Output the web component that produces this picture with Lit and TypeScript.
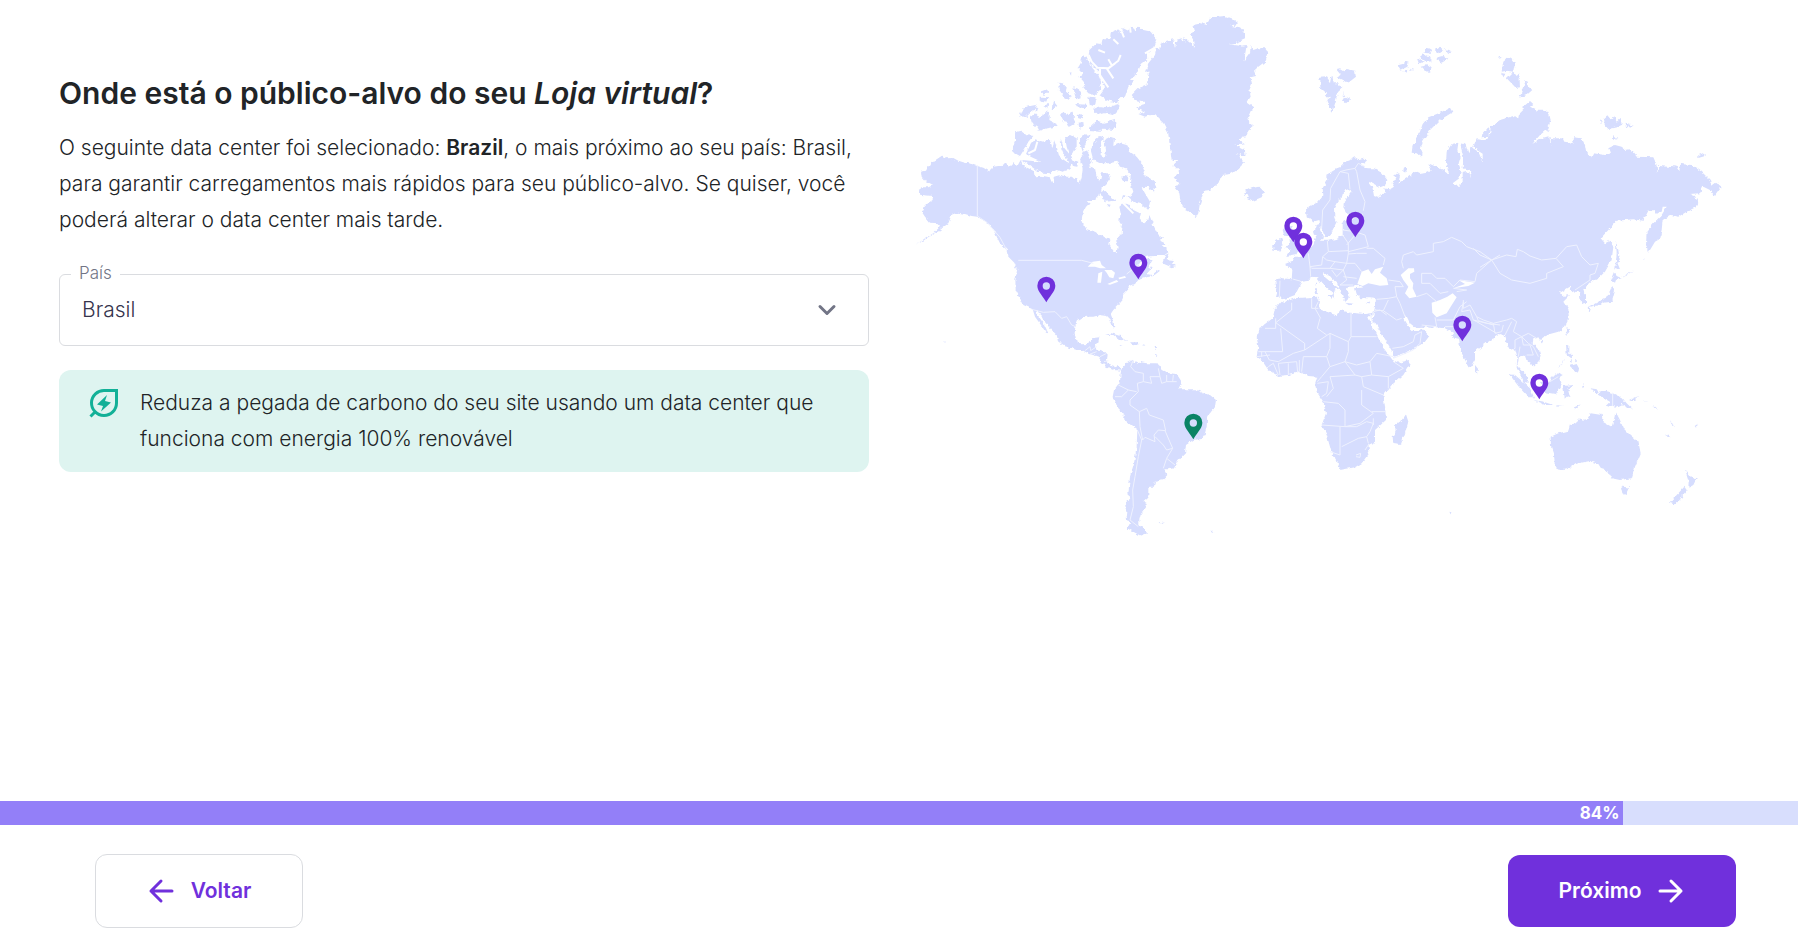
import { LitElement, css, html, svg } from "lit";
import { customElement, property } from "lit/decorators.js";

/** A run of "x,y" points measured from its own origin. */
type Run = [number, number, string];

const trace = (...runs: Run[]): string =>
  "M" +
  runs
    .map(([dx, dy, points]) =>
      points
        .trim()
        .split(/\s+/)
        .map((pair) => {
          const [x, y] = pair.split(",").map(Number);
          return `${x + dx},${y + dy}`;
        })
        .join("L")
    )
    .join("L");

const shapes = (dx: number, dy: number, list: string[]): string =>
  list.map((points) => trace([dx, dy, points]) + "Z").join("");

const lines = (dx: number, dy: number, list: string[]): string =>
  list.map((points) => trace([dx, dy, points])).join("");

const NORTH_AMERICA =
  trace(
    [0, 0, `128,466 140,475 160,474 175,482 195,488 215,492 232,498 250,503 270,515 280,500 300,497 320,487 326,500 340,490 352,498 362,480 370,497 385,505 405,515 408,532 425,530 450,535 458,552 462,530 480,525 500,530 515,530 530,535 538,552 545,530 548,505 540,480 548,460 560,448 575,485 565,498 585,505 590,530 600,543 605,520 625,520 630,535 620,550 605,565 598,590 585,600 560,600 570,610 558,620 548,640 545,665 560,688 585,695 600,705 625,715 632,720 628,735 640,752 650,757 653,740 648,720 665,700 668,680 658,665 662,640 658,620 670,610 690,615 700,630 720,640 716,655 730,672 745,660 748,645 760,675 770,695 790,715 780,722 806,735 785,735 807,755 790,768 760,768 740,770 722,786 700,812 725,800 745,775 755,782 745,800`],
    [0, 600, `755,205 740,222 755,225 775,210 780,212 760,228 740,232 715,240 705,252 690,258 680,270 668,283 668,300 655,315 640,330 632,342 640,362 643,383 635,378 628,360 622,348 600,345 580,350 560,350 545,355 528,365 526,380 524,400 530,425 545,433 565,432 575,415 598,412 595,425 585,435 590,452 605,453 620,460 618,480 625,495 645,502 655,498 665,508 660,512 645,510 620,500 605,485 595,470 570,462 545,450 530,450 500,440 475,425 470,405 450,385 430,360 420,340 408,333 415,348 432,372 445,400 438,398 425,378 405,350 398,328 370,315 360,295 347,270 346,240 352,210 346,200 340,185 325,170 320,150 300,130 285,100 270,75 245,58 232,50 215,48 195,42 175,38 155,45 145,70 120,90 90,108 70,122 48,135 75,115 100,100 120,80 110,70 90,68 75,50 65,35 75,15 98,0`],
    [0, 0, `98,588 65,585 53,570 65,562 85,562 100,555 75,542 65,530 63,515 78,512 90,490 110,478`]
  ) + "Z";

const ARCTIC = shapes(0, 0, [
  `345,397 365,392 375,405 400,408 385,425 375,445 360,468 345,460 337,445 345,425`,
  `405,418 430,425 450,420 458,445 462,420 470,440 478,470 500,485 515,492 505,510 485,515 470,510 450,520 430,518 415,515 395,500 380,490 365,480 390,482 425,485 395,472 378,462 388,440`,
  `495,410 510,405 530,415 530,440 520,460 510,470 500,440`,
  `482,415 490,440 510,465 525,490 515,495 495,470 484,445`,
  `545,403 572,404 560,425 548,455 540,430`,
  `522,480 535,485 532,500 518,498`,
  `588,418 600,408 612,412 603,435 602,465 615,472 618,450 612,420 630,410 642,414 640,438 660,430 680,435 690,455 710,470 725,490 735,515 730,525 750,535 768,550 762,575 745,560 725,562 735,580 750,605 745,630 725,612 700,605 690,595 675,590 665,600 670,585 690,590 700,575 690,545 692,525 678,505 660,500 652,485 625,490 600,490 580,480 572,450`,
  `596,575 610,570 632,590 648,602 615,605`,
  `620,612 632,614 628,622`,
  `668,528 685,530 684,544 668,543`,
  `575,375 590,362 612,368 645,360 647,380 640,390 610,386 600,392 565,390`,
  `580,328 600,318 622,322 655,312 655,330 645,344 620,338 590,346`,
  `568,150 590,130 605,132 608,118 630,118 632,98 650,90 662,100 668,84 685,92 690,80 705,88 712,80 730,90 755,95 772,118 762,145 740,160 745,175 722,195 715,212 690,240 705,240 685,260 675,290 658,292 655,308 625,302 612,295 598,285 615,262 608,240 598,215 575,195 566,170`,
  `550,166 562,175 578,205 595,225 605,250 600,270 582,285 565,280 550,262 555,250 538,230 548,222 533,205 542,190`,
  `475,248 488,250 500,262 498,275 515,288 508,300 490,290 476,270`,
  `520,262 540,268 545,292 528,298`,
  `420,275 440,268 445,277 432,285`,
  `422,290 445,292 442,308 422,305`,
  `358,348 365,330 380,320 410,314 402,330 390,340 378,352`,
  `390,352 405,340 415,350 430,345 440,332 450,345 448,360 470,372 468,380 440,385 418,392 412,380 395,370`,
  `480,348 490,335 500,345 515,335 525,350 522,372 508,380 500,365 488,362`,
  `535,368 550,366 552,382 538,386`,
  `530,340 548,345 545,358 532,355`,
  `458,300 472,318 455,330`,
  `526,312 560,314 556,325 530,322`,
  `430,318 448,312 445,328`,
  `400,325 415,322 410,338`,
  `508,218 517,216 516,232`,
  `565,290 590,292 585,318 570,315`,
  `787,790 796,765 806,760 800,778 822,780 815,790 828,798 815,802`,
  `262,660 285,685 302,712 288,700`,
  `340,775 358,795 350,798`,
]);

const ARCTIC_FJORDS = lines(0, 0, [
  `566,165 575,185 592,203 625,205 645,190 655,182 662,165`,
  `625,178 635,195`, `600,205 600,225 610,240 625,262`, `620,205 640,235`,
  `595,150 615,158`, `640,118 655,132`, `665,95 672,112`, `690,82 692,98`, `735,160 770,140`,
  `412,425 405,450 385,460`, `660,600 700,640`,
]);

const GREENLAND = trace([690, 0, `45,215 55,190 75,165 80,142 95,150 88,135 110,122 130,118 135,148 140,116 155,112 165,130 160,110 180,125 195,143 192,118 180,100 195,95 190,75 215,70 230,75 240,55 262,50 285,48 305,55 325,70 300,78 330,82 345,100 345,118 325,127 295,133 330,137 350,135 345,165 340,187 360,160 362,135 370,150 385,145 405,145 415,158 405,185 385,200 372,212 378,228 362,232 366,252 358,270 362,290 350,308 370,322 360,345 352,360 372,378 355,392 348,412 320,415 345,430 315,435 345,450 347,470 320,460 345,487 320,510 300,522 275,525 265,550 240,570 222,572 210,610 205,640 198,652 185,640 165,630 152,605 148,580 135,565 148,550 133,535 150,515 130,495 145,480 125,480 120,440 115,400 100,370 75,345 60,345 45,350 25,342 45,335 18,322 45,315 45,305 20,305 5,285 25,265 50,255 55,225 62,215`]) + "Z";

const ATLANTIC_ISLANDS = shapes(690, 0, [
  `335,560 345,572 365,562 385,557 402,575 395,592 368,603 347,597 354,588 338,580 350,578`,
  `568,233 588,232 600,250 605,222 612,250 625,250 637,264 625,275 618,300 608,335 595,315 590,300 605,290 585,288 588,278 570,262 574,250`,
  `620,210 630,208 640,214 650,207 675,212 678,230 655,248 640,240 622,232 632,224`,
  `636,272 645,290 660,298 650,312 638,300 642,288`,
  `803,196 818,192 826,185 836,188 832,200 820,206 814,215 808,206`,
  `820,214 832,212 828,220`, `840,206 850,210 842,213`,
  `860,182 872,178 880,184 872,190`, `870,170 880,162 888,168 900,172 905,184 890,186`,
  `880,158 895,142 905,148 898,160`, `872,200 892,196 905,205 900,216 884,212`,
  `914,150 930,140 940,150 926,160`, `915,175 940,168 955,176 935,188`, `945,148 965,152 955,162`,
  `430,735 440,722 455,715 458,735 448,752 430,752`,
  `458,690 472,672 486,680 482,700 498,725 508,745 500,762 468,768 482,748 466,745 480,730 478,712 462,706`,
]);

const EURASIA =
  trace(
    [1020, 360, `198,268 212,258 235,245 250,225 248,205 262,180 258,165 275,155 300,140 318,122 345,112 355,118 368,114 378,125 362,136 380,145 400,145 425,158 442,180 438,195 420,202 395,188 383,185 398,205 402,228 420,235 418,220 438,218 430,205 450,208 462,200 455,190 468,180 462,168 472,160 480,165 476,188 500,175 525,155 540,162 560,158 575,150 565,130 588,140 610,150 628,162 618,130 620,95 635,72 655,68 652,90 662,110 656,130 662,155 658,175 635,192 655,198 668,182 668,160 685,155 692,175 690,150 668,145 670,110 662,78 675,68 685,100 692,80 715,95 728,125 728,98 700,80 710,55 740,60 755,35 745,22`],
    [1740, 90, `0,322 28,320 32,290 60,270 100,258 118,265 120,250 132,238 130,230 150,213 160,222 150,230 175,242 205,242 212,270 205,295 180,315 157,342 185,325 208,318 212,345 213,325 245,325 250,335 280,338 282,322 305,325 315,345 318,362 332,385 340,370 375,375 390,370 385,355 405,345 425,350 430,360 452,358 470,380 520,382 528,400 533,425 538,408 580,412 588,405 598,422 600,402 635,405 665,425 690,450 695,468 708,458 725,470 705,498 690,480 670,470 660,490 628,492 645,498 655,522 650,530 620,545 595,560 575,555 548,570 545,600 538,628 525,635 505,668 498,645 500,605 520,580 545,555 560,530 548,530 545,545 525,552 525,540 505,542 490,572 460,568 410,572 390,595 362,625 375,640 390,632 400,650 395,690 375,725 355,745 335,755 318,770 310,778 318,800 318,818 303,822 300,795 295,780 280,790 270,770 240,788 245,798 270,795 250,815 265,840`],
    [1590, 780, `417,175 415,182 405,200 385,215 360,222 340,232 330,240 325,232 310,238 308,250 325,265 332,290 325,305 308,320 302,308 290,302 285,288 268,285 262,315 275,330 290,345 293,368 280,365 270,340 260,325 262,290 255,265 240,270 232,255 220,225 210,222 190,235 175,245 155,260 135,275 135,300 122,323 115,318 100,290 90,265 88,240 75,238 63,225 75,222 45,205 20,202 0,203`],
    [990, 780, `575,200 555,202 540,190 528,165 520,178 532,198 548,213 565,213 576,205 598,228 585,245 555,265 520,280 490,290 487,275 470,245 445,205 428,180 430,165 435,140`],
    [1020, 360, `408,538 390,535 365,535 350,522 345,505 372,502 358,498 325,500 320,508 328,528 320,545 310,535 303,515 292,490 275,478 262,462 248,457 255,472 275,488 298,506 285,508 280,528 270,510 245,490 232,472 218,470 205,480 185,482 178,500 165,525 140,535 125,538 120,530 105,528 110,510 105,478 128,475 155,478 157,450 135,432 158,422 165,410 185,410 200,395 220,375 228,355 222,335 230,315 245,310 240,330 248,345 240,362 265,362 295,355 308,345 308,310 320,300 345,298 370,285 345,280 320,282 310,265 312,245 335,215 325,208 312,212 310,228 292,245 282,265 283,290 290,305 278,330 270,345 255,352 245,325 238,300 218,305 200,292`]
  ) + "Z";

const AFRICA = shapes(990, 780, [
  `155,122 165,126 195,115 235,112 262,110 270,125 265,145 290,155 320,165 330,150 360,158 405,162 430,158 415,172 428,200 445,235 465,270 488,300 505,308 540,300 538,315 520,345 485,375 460,405 465,440 468,480 435,510 435,545 415,555 418,578 395,610 375,622 330,630 320,600 305,578 290,525 275,495 288,460 280,425 260,395 255,375 262,350 235,348 215,335 175,345 145,348 115,330 95,300 80,290 85,260 80,230 95,200 128,175 135,145`,
  `528,463 535,485 525,520 512,555 490,552 488,530 497,515 495,490 515,482`,
]);

const SMALL_EUROPE = shapes(1020, 360, [
  `262,525 282,525 278,536 264,530`, `224,505 232,505 230,520 224,518`, `227,485 231,485 231,497 227,497`,
  `318,548 342,552 330,556`, `378,550 393,543 386,553`, `240,350 252,348 250,358 240,358`,
  `632,-38 600,-22 565,-8 548,12 540,35 528,55 528,70 518,75 515,98 530,100 545,112 552,108 542,85 548,65 570,30 600,0 640,-25`,
  `492,142 502,145 498,155 490,152`,
]);

const SOUTH_AMERICA = shapes(0, 600, [
  `665,508 680,490 702,478 700,492 715,485 740,490 770,490 785,510 805,520 830,522 845,545 835,568 860,568 885,568 910,580 930,585 948,600 945,620 930,640 922,648 920,680 915,700 903,717 880,720 858,735 855,760 835,780 822,805 805,808 793,808 802,825 790,838 765,842 762,860 745,860 745,890 728,905 740,912 738,922 722,945 718,960 718,975 742,1000 722,1007 700,995 682,985 690,970 680,955 682,935 678,910 688,900 685,880 690,830 702,790 710,740 712,690 680,665 660,630 640,600 638,590 642,570 660,545 662,520`,
  `615,405 635,400 660,408 682,422 660,420 640,405`, `690,427 710,427 720,433 700,436`, `655,435 668,436 660,438`,
  `728,433 738,434 732,437`, `775,968 795,964 785,970`, `932,990 942,1000 934,997`,
  `130,424 138,425 134,430`, `764,438 772,445 766,450`, `768,460 772,462 770,475`,
]);

const EAST_ISLANDS =
  shapes(1740, 90, [
    `90,78 105,100 100,125 80,122 65,125 70,95`, `80,145 100,125 110,138 118,130 120,172 108,174`,
    `60,128 78,132 68,142`, `137,153 145,170 157,180 140,195 118,203 128,175`, `52,81 62,82 57,87`,
    `372,265 382,256 392,268 402,260 410,275 422,265 425,285 410,292 385,297 374,285`, `432,278 462,288 448,294`,
    `400,315 412,328 398,330`, `360,268 365,272 362,280`, `655,376 668,370 678,377 655,384`, `200,300 210,302 204,310`,
    `407,632 415,660 420,695 412,698 420,718 406,715 410,670`, `402,725 410,738 425,745 408,750 405,758 392,750`,
    `397,768 405,782 396,815 370,818 362,825 340,828 325,832 355,815 378,805 390,785`, `323,833 333,835 328,848`,
    `425,742 462,720 440,736`, `490,690 494,684 492,690`,
  ]) +
  shapes(1590, 780, [
    `135,315 147,330 140,340 135,335`, `238,343 255,345 275,362 300,385 312,412 295,412 270,385`,
    `310,420 340,425 370,435 345,435`, `375,436 400,438 380,440`, `330,362 352,368 385,335 398,345 388,352 392,375 375,405 345,400`,
    `400,378 430,375 425,383 407,385 420,390 415,398 422,412 412,408 404,416`, `410,205 417,208 412,225 407,215`,
    `330,244 342,243 338,253`, `408,255 418,256 418,278 430,290 424,295 410,284`, `420,318 440,312 447,325 445,338 430,332`,
    `418,300 426,298 424,310`, `432,300 440,296 440,310`, `385,325 405,295 390,322`, `430,443 452,433 440,446`,
    `455,380 462,368 460,385`, `482,385 500,388 505,395 525,392 548,398 575,412 590,430 608,447 590,442 575,432 558,440 530,435 540,425 505,405 512,398 490,395`,
    `600,420 625,408 612,420`, `640,420 655,428 645,424`, `670,435 685,448 672,440`, `705,520 722,532 712,530`, `794,498 806,490 798,503`,
    `720,480 732,498 724,492`,
    `362,530 385,520 415,512 420,495 435,488 450,475 458,482 470,480 482,460 515,465 518,485 545,500 552,478 557,455 570,480 580,505 600,525 625,545 632,580 615,620 605,655 570,660 545,655 530,630 515,628 505,612 480,603 435,612 420,622 385,630 375,625 372,585 363,560`,
    `573,680 597,682 587,705 577,700`, `765,630 780,648 800,655 790,675 775,683 776,665`, `763,680 770,690 745,725 735,733 720,728 740,705`,
    `58,755 70,758 62,763`,
  ]);

const WATER =
  shapes(0, 600, [
    `563,200 578,185 600,182 605,195 618,205 600,205 585,200`, `592,248 595,220 607,215 603,248`,
    `613,210 635,210 645,218 640,235 628,232 620,218`, `622,252 650,240 655,245 630,254`, `655,233 675,228 678,233 658,238`,
  ]) +
  shapes(1020, 360, [
    `352,492 365,455 385,448 395,462 405,448 430,440 420,458 440,475 445,495 420,497 385,490 368,498`,
    `482,465 505,445 522,445 523,455 510,462 510,475 520,490 518,505 530,530 508,535 495,520 505,500 490,480`,
    `575,548 600,540 622,530 638,520 650,532 632,560 620,580 590,592 577,578`,
    `655,480 705,488 685,498 640,505 675,492`,
  ]);

const BORDERS =
  lines(0, 0, [`232,498 232,648 262,668 300,712 320,750`, `355,781 545,781 580,790`, `680,822 720,790`]) +
  lines(0, 600, [
    `395,328 430,337 465,335 485,355 500,350 515,375 527,380`, `555,452 570,440 572,452 590,440`, `590,455 570,462`, `600,470 620,460`, `612,485 625,482`,
    `700,480 692,500 705,515 730,520 730,545 712,550 715,575 690,600 690,615 718,635 740,625 748,645 790,660 797,692 775,690 762,705 765,725 735,712 728,720 720,680 718,635`,
    `645,590 665,590 685,570 655,555`, `685,570 710,575`, `730,545 755,550 750,530 780,530 775,505`, `780,530 785,550 800,545 800,525`, `800,545 830,545`, `820,525 818,545`,
    `765,710 790,735 800,750 818,745 795,692`, `818,745 800,775 790,805`, `800,775 825,795`,
    `712,690 725,720 715,770 705,830 698,870 700,920 690,960 715,980`,
  ]) +
  lines(1020, 360, [
    `245,325 248,270 270,240 272,205 300,155 325,160 330,208`, `300,155 318,150 345,145 350,155 360,210 375,245 370,272`, `345,145 355,130 375,140`,
    `262,362 265,395 248,410 260,420 285,425 320,430 325,400 325,370 308,345`, `308,330 345,335 375,345 385,380 325,395`, `345,345 320,375`, `380,385 400,385 435,415 430,435`,
    `325,402 350,400 380,400`, `265,395 325,392`, `320,430 345,430 365,455`, `310,470 350,475`, `285,425 270,445 215,445 210,440 245,435 248,410`, `275,450 290,470 310,450 320,480 300,495`, `300,495 340,495`, `320,430 310,450 270,445`,
    `205,400 210,440 212,470`, `120,482 118,530`, `158,477 180,483`,
    `445,480 480,485 490,500 465,500 470,530`, `410,538 445,535 470,530 480,550 495,590`, `405,570 430,572 445,540`, `430,572 470,600 485,595`,
    `485,425 490,405 520,395 530,405 580,395 580,370 610,365 635,352 665,365 680,380 720,395 755,420 780,405`, `485,425 490,445`, `530,530 560,520 590,545`,
    `545,490 545,460 575,460 590,475 615,475 640,500 660,480 705,485 710,460 755,420`, `545,490 570,490 600,520 625,515`, `640,505 680,510 650,515`,
    `585,592 590,620 545,615`, `590,600 640,600 660,560 680,545`, `670,545 665,575 690,570 700,600 740,610 780,615`, `700,600 710,605 770,640`, `615,620 645,620`,
    `460,715 520,690 540,670 545,635`,
  ]) +
  lines(1740, 90, [
    `-20,655 0,675 35,690 80,675 108,680 112,658 130,665 150,678 185,690 228,685 260,650 290,645 305,680 330,705 355,700 345,730 330,735 330,750 285,780`,
    `35,690 60,730 95,750 150,760 200,745 200,730 250,710 228,685`, `35,690 0,712`,
  ]) +
  lines(1590, 780, [
    `100,120 100,145 120,135 140,170 160,180 190,190 230,180 245,175 260,185 250,215 275,230 295,220 320,235`, `190,190 195,220 215,215 220,195`, `140,170 145,182 190,195`, `225,225 245,185`,
    `255,265 255,240 275,230 295,250 310,260 325,290`, `275,230 280,255 300,255 310,285 290,285`, `265,290 270,260`, `360,365 385,350`, `548,398 548,438`,
  ]) +
  lines(990, 780, [
    `135,190 185,150 185,128`, `245,115 245,145 265,145`, `137,175 137,188 224,250 224,270`, `105,205 137,205 137,188`, `152,205 158,275 105,275`, `85,275 105,275 118,300 145,305 190,280 224,270 300,220 355,245 355,275 345,305`,
    `300,220 300,265 290,290 220,290 215,335`, `270,175 262,205 290,225`, `363,158 363,230 440,230`, `363,230 355,245`, `265,125 255,145 272,175`, `290,290 300,320 275,350 262,365`, `300,320 345,305 375,345 395,350`,
    `345,305 380,315 420,305 425,345 395,350 400,380 460,405`, `420,305 440,280 490,290`, `425,345 475,350 520,325 490,305`, `475,350 475,385`, `300,350 375,345`, `262,370 295,365 290,400 275,410`, `300,350 310,385 290,410`, `280,425 325,430 345,450 345,490 345,500 380,500`, `275,495 345,500 390,490 430,460 395,435 395,390`,
    `330,585 330,500`, `335,560 385,535 410,530`, `380,500 410,485 430,490 420,515 410,530 415,550`, `415,555 405,570`, `378,585 392,580 390,592 378,590`, `425,455 465,455`, `430,475 430,495`, `95,275 95,290`, `80,290 120,285`, `115,320 130,310 145,345`, `145,310 150,345`, `175,310 175,345`, `200,305 203,338`, `208,300 208,335`, `145,310 200,305`, `428,190 420,160`, `300,575 330,585`,
    `430,155 450,150 470,165`, `487,265 520,260 550,245 555,225 575,215`,
  ]);

const PIN_BODY = "M0,0C-7,-16 -27,-32 -27,-50A27,27 0 0 1 27,-50C27,-32 7,-16 0,0ZM0,-60A11,11 0 1 0 0,-38A11,11 0 1 0 0,-60Z";

interface DataCenter { name: string; x: number; y: number; selected?: boolean }

const DATA_CENTERS: DataCenter[] = [
  { name: "United States", x: 439, y: 907 },
  { name: "Canada", x: 715, y: 838 },
  { name: "United Kingdom", x: 1180, y: 727 },
  { name: "France", x: 1210, y: 775 },
  { name: "Lithuania", x: 1366, y: 712 },
  { name: "India", x: 1687, y: 1024 },
  { name: "Indonesia", x: 1918, y: 1198 },
  { name: "Brazil", x: 880, y: 1318, selected: true },
];

@customElement("data-center-map")
export class DataCenterMap extends LitElement {
  static styles = css`
    :host { display: block; }
    .map { display: block; width: 100%; height: auto; }
    .land { fill: #d6ddfe; filter: url(#coast); }
    .fjords { fill: none; stroke: #fff; stroke-width: 6; stroke-linejoin: round; }
    .water { fill: #fff; }
    .borders { fill: none; stroke: #eff2ff; stroke-width: 3; stroke-linejoin: round; }
    .pin { fill: #7030dc; fill-rule: evenodd; }
    .selected { fill: #0a8365; }
  `;

  render() {
    return html`
      <svg class="map" viewBox="0 0 2520 1680" role="img" aria-label="Data centers">
        <filter id="coast" x="0" y="0" width="100%" height="100%" color-interpolation-filters="sRGB">
          <feTurbulence type="fractalNoise" baseFrequency="0.08" numOctaves="2" seed="4" result="noise" />
          <feDisplacementMap in="SourceGraphic" in2="noise" scale="13" xChannelSelector="R" yChannelSelector="G" />
        </filter>
        <g class="land">
          <path d=${NORTH_AMERICA} />
          <path d=${ARCTIC} />
          <path d=${GREENLAND} />
          <path d=${ATLANTIC_ISLANDS} />
          <path d=${EURASIA} />
          <path d=${AFRICA} />
          <path d=${SMALL_EUROPE} />
          <path d=${SOUTH_AMERICA} />
          <path d=${EAST_ISLANDS} />
        </g>
        <path class="fjords" d=${ARCTIC_FJORDS} />
        <path class="water" d=${WATER} />
        <path class="borders" d=${BORDERS} />
        ${DATA_CENTERS.map(
          (center) => svg`<path
            class=${center.selected ? "pin selected" : "pin"}
            transform="translate(${center.x} ${center.y})"
            d=${PIN_BODY}
          />`
        )}
      </svg>
    `;
  }
}

@customElement("app-root")
export class AppRoot extends LitElement {
  static styles = css`
    :host {
      display: flex;
      flex-direction: column;
      min-height: 100vh;
      background: #fff;
      color: #212427;
      font-family: Inter, "Open Sans", sans-serif;
      font-size: 21px;
      font-weight: 300;
      line-height: 36px;
    }
    * { box-sizing: border-box; }
    .content {
      flex: 1;
      display: grid;
      grid-template-columns: 27fr 28fr;
      column-gap: 31px;
      align-items: start;
      padding: 0 58px 0 59px;
    }
    .form { display: flex; flex-direction: column; padding-top: 71px; }
    .title { margin: 0 0 14px; font-size: 30px; font-weight: 600; line-height: 45px; }
    .intro { margin: 0 0 36px; }
    .intro strong { font-weight: 600; }
    .field {
      position: relative;
      display: flex;
      align-items: center;
      margin-bottom: 24px;
    }
    .label {
      position: absolute;
      top: -13px;
      left: 12px;
      padding: 0 8px;
      background: #fff;
      color: #727586;
      font-size: 17px;
      line-height: 24px;
    }
    .select {
      width: 100%;
      height: 72px;
      padding: 0 64px 0 22px;
      border: 1px solid #dadce0;
      border-radius: 6px;
      background: #fff;
      color: #36344d;
      font: inherit;
      appearance: none;
    }
    .chevron { position: absolute; right: 30px; width: 24px; height: 24px; pointer-events: none; }
    .notice {
      display: flex;
      gap: 21px;
      padding: 15px 30px;
      border-radius: 12px;
      background: #def4f0;
    }
    .notice p { margin: 0; }
    .leaf { flex: none; width: 30px; height: 36px; }
    .progress { display: flex; background: #d8defd; }
    .bar {
      padding-right: 3px;
      background: #937ff8;
      color: #fff;
      font-size: 17px;
      font-weight: 700;
      line-height: 24px;
      text-align: right;
    }
    .actions {
      display: flex;
      align-items: center;
      justify-content: space-between;
      padding: 29px 62px 14px 95px;
    }
    .button {
      display: flex;
      align-items: center;
      justify-content: center;
      gap: 16px;
      height: 72px;
      border: 0;
      border-radius: 12px;
      font: inherit;
      font-weight: 600;
      cursor: pointer;
    }
    .back { width: 208px; height: 74px; border: 1px solid #dadce0; background: #fff; color: #7030dc; }
    .next { width: 228px; background: #7030dc; color: #fff; }
    .arrow { width: 28px; height: 28px; }
  `;

  @property({ type: Number }) percent = 84;

  render() {
    const filled = 39 + this.percent * 0.61;
    return html`
      <main class="content">
        <section class="form">
          <h1 class="title">Onde está o público-alvo do seu <em>Loja virtual</em>?</h1>
          <p class="intro">
            O seguinte data center foi selecionado: <strong>Brazil</strong>, o mais próximo ao seu país: Brasil,
            para garantir carregamentos mais rápidos para seu público-alvo. Se quiser, você poderá alterar o data
            center mais tarde.
          </p>
          <div class="field">
            <select class="select" id="country">
              <option>Brasil</option>
            </select>
            <label class="label" for="country">País</label>
            <svg class="chevron" viewBox="0 0 24 24" fill="none" stroke="#727586" stroke-width="3" stroke-linecap="round" stroke-linejoin="round">
              <path d="M5 8.5l7 7 7-7" />
            </svg>
          </div>
          <div class="notice">
            <svg class="leaf" viewBox="0 0 30 36" fill="none" stroke="#12b097" stroke-width="3">
              <path d="M1.5 31.5L6.5 26.5M27.5 5.5H15.5A12.5 12.5 0 1 0 27.5 18Z" />
              <path d="M18 10L8 19.500l6 1.500-2 5.500L22 17.500l-6-1.500Z" fill="#12b097" stroke="none" />
            </svg>
            <p>Reduza a pegada de carbono do seu site usando um data center que funciona com energia 100% renovável</p>
          </div>
        </section>
        <data-center-map></data-center-map>
      </main>
      <div class="progress" role="progressbar" aria-valuenow=${this.percent} aria-valuemin="0" aria-valuemax="100">
        <div class="bar" style="width:${filled}%">${this.percent}%</div>
      </div>
      <footer class="actions">
        <button class="button back" type="button">
          <svg class="arrow" viewBox="0 0 28 28" fill="none" stroke="currentColor" stroke-width="3" stroke-linecap="round" stroke-linejoin="round">
            <path d="M25 14H4M14 4L4 14l10 10" />
          </svg>
          Voltar
        </button>
        <button class="button next" type="button">
          Próximo
          <svg class="arrow" viewBox="0 0 28 28" fill="none" stroke="currentColor" stroke-width="3" stroke-linecap="round" stroke-linejoin="round">
            <path d="M3 14h21M14 4l10 10-10 10" />
          </svg>
        </button>
      </footer>
    `;
  }
}
